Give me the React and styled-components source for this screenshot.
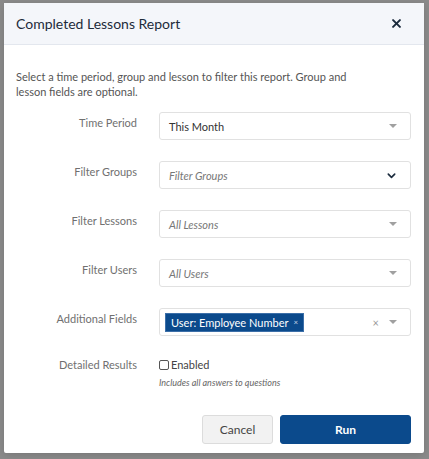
import React from 'react';
import styled, { createGlobalStyle } from 'styled-components';

const GlobalStyle = createGlobalStyle`
  html, body {
    margin: 0;
    padding: 0;
    background: #8b8b8b;
    font-family: Lato, "Open Sans", sans-serif;
  }
`;

const Backdrop = styled.div`
  width: 429px;
  height: 459px;
  box-sizing: border-box;
  padding: 3px 5px 6px 4px;
  background: #8b8b8b;
  overflow: hidden;
`;

const Modal = styled.div`
  background: #fff;
  border-radius: 2px;
  height: 100%;
  display: flex;
  flex-direction: column;
  box-shadow: 0 2px 8px rgba(0, 0, 0, 0.15);
`;

const Header = styled.header`
  height: 42px;
  box-sizing: border-box;
  background: #f4f6fa;
  border-bottom: 1px solid #e3e7ee;
  display: flex;
  align-items: center;
  justify-content: space-between;
  padding: 0 23px 0 12px;
`;

const Title = styled.h3`
  margin: 0;
  font-size: 14px;
  font-weight: 400;
  color: #1d2b3a;
`;

const Close = styled.button`
  border: 0;
  background: none;
  padding: 0;
  display: flex;
  color: #1a2a3c;
  cursor: pointer;
`;

const Body = styled.div`
  padding: 24px 13px 0 12px;
`;

const Intro = styled.p`
  margin: 0 0 13px;
  font-size: 11px;
  line-height: 15px;
  color: #555;
  width: 345px;
`;

const Form = styled.div`
  display: grid;
  grid-template-columns: 121px 1fr;
  column-gap: 22px;
  row-gap: 21px;
  align-items: start;
`;

const Label = styled.label`
  text-align: right;
  font-size: 11px;
  color: #707070;
  padding-top: ${(p) => (p.$check ? '1px' : '4px')};
`;

const Select = styled.div`
  height: 28px;
  box-sizing: border-box;
  border: 1px solid #e1e1e1;
  border-radius: 3px;
  display: flex;
  align-items: center;
  padding: 0 13px 0 9px;
  gap: 8px;
  font-size: 11px;
  color: ${(p) => (p.$placeholder ? '#777' : '#333')};
  font-style: ${(p) => (p.$placeholder ? 'italic' : 'normal')};
`;

const Value = styled.span`
  flex: 1;
`;

const Caret = styled.span`
  width: 0;
  height: 0;
  border-left: 4px solid transparent;
  border-right: 4px solid transparent;
  border-top: 4px solid #a0a0a0;
`;

const Tag = styled.span`
  background: #0b4a8c;
  color: #fff;
  font-style: normal;
  font-size: 11px;
  padding: 2px 5px 2px 5px;
  border: 1px solid #3c6fa8;
  margin-left: -4px;
  display: inline-flex;
  align-items: center;
  gap: 5px;
`;

const TagX = styled.span`
  font-size: 8px;
  color: #c6d5e6;
`;

const Clear = styled.span`
  font-size: 11px;
  color: #999;
  margin-right: 2px;
`;

const CheckWrap = styled.div`
  display: flex;
  flex-direction: column;
  gap: 6px;
  margin-top: 1px;
`;

const CheckRow = styled.label`
  display: flex;
  align-items: center;
  gap: 2px;
  font-size: 11px;
  color: #444;
`;

const Box = styled.span`
  width: 8px;
  height: 8px;
  border: 1px solid #555;
  border-radius: 2px;
`;

const Hint = styled.span`
  font-size: 9px;
  font-style: italic;
  color: #666;
`;

const Footer = styled.div`
  display: flex;
  justify-content: flex-end;
  gap: 7px;
  padding-top: 27px;
`;

const Button = styled.button`
  height: 29px;
  border-radius: 3px;
  font-family: inherit;
  font-size: 12px;
  cursor: pointer;
  width: ${(p) => (p.$primary ? '131px' : '71px')};
  background: ${(p) => (p.$primary ? '#0b4a8c' : '#f2f2f2')};
  color: ${(p) => (p.$primary ? '#fff' : '#444')};
  font-weight: ${(p) => (p.$primary ? 700 : 400)};
  border: 1px solid ${(p) => (p.$primary ? '#0b4a8c' : '#dcdcdc')};
`;

const Chevron = () => (
  <svg width="11" height="11" viewBox="0 0 24 24" fill="none" stroke="#1b2b3d" strokeWidth="3.5" strokeLinecap="round" strokeLinejoin="round">
    <polyline points="5 9 12 16 19 9" />
  </svg>
);

export default function App() {
  return (
    <>
      <GlobalStyle />
      <Backdrop>
        <Modal>
          <Header>
            <Title>Completed Lessons Report</Title>
            <Close aria-label="Close">
              <svg width="9" height="9" viewBox="0 0 10 10" stroke="currentColor" strokeWidth="2.2" strokeLinecap="round">
                <line x1="1.2" y1="1.2" x2="8.8" y2="8.8" />
                <line x1="8.8" y1="1.2" x2="1.2" y2="8.8" />
              </svg>
            </Close>
          </Header>
          <Body>
            <Intro>
              Select a time period, group and lesson to filter this report. Group and lesson fields are optional.
            </Intro>
            <Form>
              <Label>Time Period</Label>
              <Select>
                <Value>This Month</Value>
                <Caret />
              </Select>

              <Label>Filter Groups</Label>
              <Select $placeholder>
                <Value>Filter Groups</Value>
                <Chevron />
              </Select>

              <Label>Filter Lessons</Label>
              <Select $placeholder>
                <Value>All Lessons</Value>
                <Caret />
              </Select>

              <Label>Filter Users</Label>
              <Select $placeholder>
                <Value>All Users</Value>
                <Caret />
              </Select>

              <Label>Additional Fields</Label>
              <Select>
                <Value>
                  <Tag>
                    User: Employee Number <TagX>×</TagX>
                  </Tag>
                </Value>
                <Clear>×</Clear>
                <Caret />
              </Select>

              <Label $check>Detailed Results</Label>
              <CheckWrap>
                <CheckRow>
                  <Box /> Enabled
                </CheckRow>
                <Hint>Includes all answers to questions</Hint>
              </CheckWrap>
            </Form>
            <Footer>
              <Button>Cancel</Button>
              <Button $primary>Run</Button>
            </Footer>
          </Body>
        </Modal>
      </Backdrop>
    </>
  );
}
